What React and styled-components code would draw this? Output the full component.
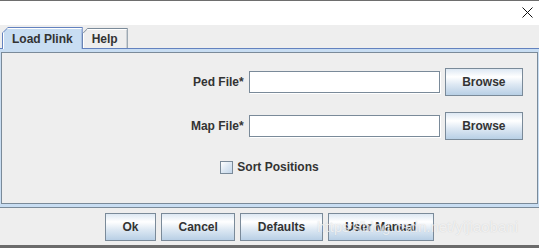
import React from "react";
import styled, { createGlobalStyle } from "styled-components";

const Global = createGlobalStyle`
  html, body { margin: 0; padding: 0; background: #eeeeee; }
  body { font-family: "Liberation Sans", Arial, sans-serif; }
  * { box-sizing: border-box; }
`;

const Window = styled.div`
  position: relative;
  width: 539px;
  height: 248px;
  background: #eeeeee;
  display: flex;
  flex-direction: column;
  overflow: hidden;
  font-family: "Liberation Sans", Arial, sans-serif;
  font-size: 12px;
  font-weight: bold;
  color: #333333;
`;

const TitleBar = styled.div`
  height: 25px;
  flex: none;
  background: #ffffff;
  border-top: 1px solid #6e6e6e;
  display: flex;
  justify-content: flex-end;
  align-items: flex-start;
  padding: 6px 6px 0 0;
`;

const TabStrip = styled.div`
  height: 23px;
  flex: none;
  display: flex;
  align-items: flex-end;
  padding-left: 2px;
`;

const Tab = styled.div`
  position: relative;
  z-index: ${(p) => (p.$selected ? 2 : 1)};
  height: ${(p) => (p.$selected ? "22px" : "20px")};
  margin-bottom: ${(p) => (p.$selected ? "-1px" : "0")};
  margin-left: ${(p) => (p.$selected ? "0" : "-1px")};
  padding: 1px 1px 0 1px;
  background: ${(p) => (p.$selected ? "#6382bf" : "#7a8a99")};
  clip-path: polygon(0 6px, 6px 0, 100% 0, 100% 100%, 0 100%);
`;

const TabFace = styled.div`
  height: 100%;
  padding: 0 9px;
  display: flex;
  align-items: center;
  justify-content: center;
  background: ${(p) => (p.$selected ? "#c8ddf2" : "#eeeeee")};
  box-shadow: inset 1px 1px 0 #ffffff;
  clip-path: polygon(0 5px, 5px 0, 100% 0, 100% 100%, 0 100%);
  color: #333333;
  white-space: nowrap;
`;

const Content = styled.div`
  height: 160px;
  flex: none;
  border-top: 1px solid #6382bf;
  border-bottom: 1px solid #7a8a99;
  background: #c8ddf2;
  padding: 3px 1px 3px 1px;
  display: flex;
`;

const Panel = styled.div`
  flex: 1;
  background: #eeeeee;
  border: 1px solid #7a8a99;
  display: flex;
  flex-direction: column;
  padding: 15px 14px 0 0;
`;

const FileRow = styled.div`
  height: 28px;
  display: flex;
  align-items: center;
  justify-content: flex-end;
  margin-bottom: ${(p) => p.$after}px;
`;

const Label = styled.span`
  margin-right: 5px;
  white-space: nowrap;
`;

const Field = styled.div`
  width: 191px;
  height: 22px;
  background: #ffffff;
  border: 1px solid #7a8a99;
  box-shadow: 1px 1px 0 #ffffff;
  margin-right: 5px;
`;

const Button = styled.button`
  height: 28px;
  padding: 0 16.5px;
  border: 1px solid #7a8a99;
  border-radius: 0;
  background: linear-gradient(
    to bottom,
    #dde8f3 0%,
    #ffffff 30%,
    #dde8f3 60%,
    #b8cfe5 100%
  );
  font-family: "Liberation Sans", Arial, sans-serif;
  font-size: 12px;
  font-weight: bold;
  color: #333333;
  white-space: nowrap;
  cursor: pointer;
`;

const CheckRow = styled.label`
  height: 16px;
  display: flex;
  align-items: center;
  justify-content: center;
  gap: 4px;
  padding-left: 14px;
`;

const CheckBox = styled.span`
  width: 13px;
  height: 13px;
  border: 1px solid #7a8a99;
  background: linear-gradient(
    to bottom right,
    #ffffff 0%,
    #dde8f3 50%,
    #c3d6ea 100%
  );
`;

const Footer = styled.div`
  height: 37px;
  flex: none;
  display: flex;
  justify-content: center;
  align-items: flex-start;
  gap: 5px;
  padding-top: 5px;
`;

const BottomBar = styled.div`
  height: 3px;
  flex: none;
  background: #6b6b6b;
`;

const Watermark = styled.div`
  position: absolute;
  left: 317px;
  top: 218px;
  font-family: "Liberation Sans", Arial, sans-serif;
  font-size: 15px;
  font-weight: normal;
  color: rgba(255, 255, 255, 0.7);
  text-shadow: 0 0 1px rgba(120, 120, 120, 0.3);
  white-space: nowrap;
  pointer-events: none;
`;

const CloseIcon = () => (
  <svg width="11" height="11" viewBox="0 0 11 11">
    <path d="M0.5 0.5 L10.5 10.5 M10.5 0.5 L0.5 10.5" stroke="#111" strokeWidth="1" />
  </svg>
);

export default function App() {
  return (
    <>
      <Global />
      <Window>
        <TitleBar>
          <CloseIcon />
        </TitleBar>
        <TabStrip>
          <Tab $selected>
            <TabFace $selected>Load Plink</TabFace>
          </Tab>
          <Tab>
            <TabFace>Help</TabFace>
          </Tab>
        </TabStrip>
        <Content>
          <Panel>
            <FileRow $after={16}>
              <Label>Ped File*</Label>
              <Field />
              <Button>Browse</Button>
            </FileRow>
            <FileRow $after={19}>
              <Label>Map File*</Label>
              <Field />
              <Button>Browse</Button>
            </FileRow>
            <CheckRow>
              <CheckBox />
              <span>Sort Positions</span>
            </CheckRow>
          </Panel>
        </Content>
        <Footer>
          <Button>Ok</Button>
          <Button>Cancel</Button>
          <Button>Defaults</Button>
          <Button>User Manual</Button>
        </Footer>
        <BottomBar />
        <Watermark>https://blog.csdn.net/yijiaobani</Watermark>
      </Window>
    </>
  );
}
